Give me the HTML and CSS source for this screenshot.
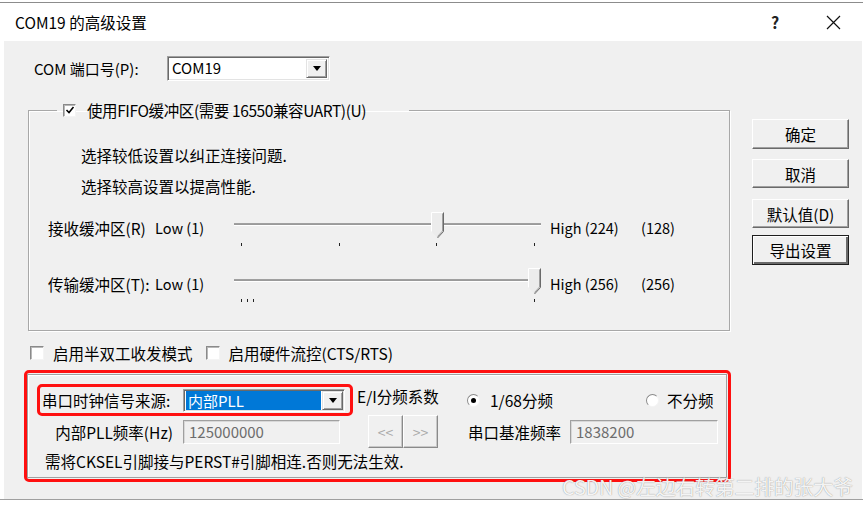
FILE: index.html
```html
<!DOCTYPE html>
<html lang="zh-CN">
<head>
<meta charset="utf-8">
<title>COM19 的高级设置</title>
<link rel="stylesheet" href="styles.css">
</head>
<body>
<div class="window">
  <div class="titlebar">
    <span class="title">COM19 的高级设置</span>
    <span class="help">?</span>
    <span class="close"><svg width="15" height="15" viewBox="0 0 15 15"><path d="M1 1L14 14M14 1L1 14" stroke="#111" stroke-width="1.2" fill="none"/></svg></span>
  </div>
  <div class="client">
    <div class="main">
      <div class="port-row">
        <span class="port-label">COM 端口号(P):</span>
        <div class="combo port-combo">
          <span class="combo-text">COM19</span>
          <span class="combo-btn"><svg width="8" height="5" viewBox="0 0 8 5"><path d="M0 0H8L4 5Z" fill="#000"/></svg></span>
        </div>
      </div>

      <fieldset class="group">
        <legend class="group-legend">
          <span class="check"><svg width="10" height="10" viewBox="0 0 10 10"><path d="M1.5 5L4 7.5L8.5 2" stroke="#000" stroke-width="1.6" fill="none"/></svg></span>
          <span class="legend-text">使用FIFO缓冲区(需要 16550兼容UART)(U)</span>
        </legend>
        <div class="group-body">
          <p class="hint">选择较低设置以纠正连接问题.</p>
          <p class="hint">选择较高设置以提高性能.</p>

          <div class="slider-row">
            <span class="s-label">接收缓冲区(R)</span>
            <span class="s-low">Low (1)</span>
            <div class="slider">
              <div class="track"></div>
              <i class="tick" style="left:7px"></i>
              <i class="tick" style="left:105px"></i>
              <i class="tick" style="left:202px"></i>
              <i class="tick" style="left:300px"></i>
              <svg class="thumb" style="left:197px" width="13" height="27" viewBox="0 0 13 27">
                <path d="M0.5 0.5H12.5V19.5L6.5 26L0.5 19.5Z" fill="#ececec"/>
                <path d="M0.5 19.5V0.5H12" stroke="#fff" fill="none"/>
                <path d="M12.5 0.5V19.5L6.5 26" stroke="#6a6a6a" fill="none"/>
                <path d="M11.5 1.5V19L6.5 24.5" stroke="#a0a0a0" fill="none"/>
              </svg>
            </div>
            <span class="s-high">High (224)</span>
            <span class="s-val">(128)</span>
          </div>

          <div class="slider-row">
            <span class="s-label">传输缓冲区(T):</span>
            <span class="s-low">Low (1)</span>
            <div class="slider">
              <div class="track"></div>
              <i class="tick" style="left:7px"></i>
              <i class="tick" style="left:13px"></i>
              <i class="tick" style="left:19px"></i>
              <i class="tick" style="left:300px"></i>
              <svg class="thumb" style="left:294px" width="13" height="27" viewBox="0 0 13 27">
                <path d="M0.5 0.5H12.5V19.5L6.5 26L0.5 19.5Z" fill="#ececec"/>
                <path d="M0.5 19.5V0.5H12" stroke="#fff" fill="none"/>
                <path d="M12.5 0.5V19.5L6.5 26" stroke="#6a6a6a" fill="none"/>
                <path d="M11.5 1.5V19L6.5 24.5" stroke="#a0a0a0" fill="none"/>
              </svg>
            </div>
            <span class="s-high">High (256)</span>
            <span class="s-val">(256)</span>
          </div>
        </div>
      </fieldset>

      <div class="opts">
        <span class="check"></span>
        <span class="opt-text">启用半双工收发模式</span>
        <span class="check opt2"></span>
        <span class="opt-text">启用硬件流控(CTS/RTS)</span>
      </div>

      <div class="clockbox">
        <div class="clockframe">
          <div class="clk-row1">
            <div class="mark">
              <span class="src-label">串口时钟信号来源:</span>
              <div class="combo src-combo">
                <span class="combo-sel">内部PLL</span>
                <span class="combo-btn"><svg width="8" height="5" viewBox="0 0 8 5"><path d="M0 0H8L4 5Z" fill="#000"/></svg></span>
              </div>
            </div>
            <span class="ei">E/I分频系数</span>
            <span class="radio-item r1"><span class="radio on"></span><span>1/68分频</span></span>
            <span class="radio-item r2"><span class="radio"></span><span>不分频</span></span>
          </div>
          <div class="clk-row2">
            <span class="pll-label">内部PLL频率(Hz)</span>
            <span class="field pll-field">125000000</span>
            <span class="arrows"><span class="abtn">&lt;&lt;</span><span class="abtn">&gt;&gt;</span></span>
            <span class="base-label">串口基准频率</span>
            <span class="field base-field">1838200</span>
          </div>
          <div class="clk-row3">需将CKSEL引脚接与PERST#引脚相连.否则无法生效.</div>
        </div>
      </div>
    </div>

    <div class="side">
      <span class="btn b1">确定</span>
      <span class="btn b2">取消</span>
      <span class="btn b3">默认值(D)</span>
      <span class="btn b4 default">导出设置</span>
    </div>
  </div>
  <div class="watermark">CSDN @左边右转第二排的张大爷</div>
</div>
</body>
</html>
```

FILE: styles.css
```css
* { box-sizing: border-box; }
html, body { margin: 0; padding: 0; background: #fff; }
body {
  width: 868px; height: 506px; overflow: hidden;
  font-family: "Noto Sans CJK SC", "Liberation Sans", sans-serif;
  font-size: 15.5px; color: #000;
}
.window {
  position: relative;
  margin-top: 2px;
  width: 863px;
  border-top: 1px solid #8c8c8c;
  border-bottom: 1px solid #a0a0a0;
  background: #fff;
}
.titlebar {
  height: 38px; display: flex; align-items: center;
  padding-left: 15px; background: #fff;
}
.title { flex: 1; line-height: 38px; }
.help { width: 16px; text-align: center; margin-right: 43px; font-size: 16px; font-weight: bold; color: #222; }
.close { width: 15px; height: 15px; margin-right: 22px; display: flex; }

.client {
  margin-left: 4px; width: 858px; height: 458px;
  background: #f0f0f0; display: flex;
}
.main { width: 726px; padding-top: 15px; }
.port-row { display: flex; align-items: center; height: 24px; padding-left: 30px; }
.port-label { width: 133px; font-size: 15px; }

.combo {
  display: flex; align-items: center; background: #fff;
  border: 1px solid; border-color: #a0a0a0 #fff #fff #a0a0a0;
  box-shadow: inset 1px 1px 0 #696969, inset -1px -1px 0 #e3e3e3;
  padding: 2px;
}
.port-combo { width: 163px; height: 25px; }
.combo-text { flex: 1; padding-left: 2px; font-size: 15px; line-height: 20px; }
.combo-btn {
  width: 21px; height: 19px; display: flex; align-items: center; justify-content: center;
  background: #f0f0f0; border: 1px solid; border-color: #e3e3e3 #696969 #696969 #e3e3e3;
  box-shadow: inset 1px 1px 0 #fff, inset -1px -1px 0 #a0a0a0;
}

.group {
  margin: 20px 0 0 24px; padding: 0; width: 702px;
  border: 1px solid #a8a8a8; box-shadow: inset 1px 1px 0 #fff, 1px 1px 0 #fff;
  min-width: 0;
}
.group-legend {
  margin-left: 28px; padding: 0 43px 0 6px; height: 20px;
  display: flex; align-items: center; gap: 11px; line-height: 20px;
}
.legend-text { letter-spacing: -0.4px; }
.check {
  width: 13px; height: 13px; background: #fff;
  border: 1px solid; border-color: #8a8a8a #f4f4f4 #f4f4f4 #8a8a8a;
  box-shadow: inset 1px 1px 0 #b8b8b8;
  display: flex; align-items: center; justify-content: center; flex: none;
}
.group-body { padding: 20px 0 24px 0; }
.hint { margin: 0 0 0 52px; line-height: 31px; }

.slider-row { display: flex; height: 36px; margin: 12px 0 0 19px; line-height: 28px; }
.slider-row + .slider-row { margin-top: 20px; }
.s-label { width: 107px; }
.s-low { width: 79px; font-size: 14.5px; }
.slider { position: relative; width: 307px; height: 36px; }
.track {
  position: absolute; left: 0; right: 0; top: 9px; height: 3px;
  border-top: 1px solid #a0a0a0; background: #9a9a9a; border-bottom: 1px solid #fff;
}
.tick { position: absolute; top: 29px; width: 1px; height: 3px; background: #222; }
.thumb { position: absolute; top: -2px; }
.s-high { width: 91px; margin-left: 9px; font-size: 14.5px; }
.s-val { font-size: 14.5px; }

.opts { display: flex; align-items: center; height: 20px; margin-top: 12px; padding-left: 26px; }
.opts .check { width: 14px; height: 14px; }
.opt-text { margin-left: 9px; }
.opt2 { margin-left: 13px; }

.clockbox {
  margin: 7px 0 0 20px; width: 707px;
  border: 3px solid #ff1010; border-radius: 5px;
  padding: 1px 1px 1px 0;
}
.clockframe {
  border: 1px solid #a0a0a0; box-shadow: inset 1px 1px 0 #fff;
  padding: 9px 0 3px 9px;
}
.clk-row1 { display: flex; align-items: flex-start; height: 32px; }
.mark {
  width: 316px; height: 32px; display: flex; align-items: center;
  border: 3px solid #ff1010; border-radius: 5px; padding-left: 2px;
}
.src-label { width: 141px; }
.src-combo { width: 162px; height: 23px; padding: 1px 1px 1px 2px; }
.combo-sel {
  width: 136px; height: 19px; background: #0078d7; color: #fff;
  line-height: 19px; padding-left: 2px; font-size: 15px;
}
.src-combo .combo-btn { margin-left: 1px; height: 19px; }
.ei { width: 110px; margin-left: 4px; line-height: 24px; }
.radio-item { display: flex; align-items: center; height: 32px; }
.r1 { width: 179px; gap: 10px; }
.r2 { gap: 8px; }
.radio {
  width: 13px; height: 13px; border-radius: 50%; background: #fff;
  border: 1px solid; border-color: #8a8a8a #f4f4f4 #f4f4f4 #8a8a8a;
  display: flex; align-items: center; justify-content: center;
}
.radio.on::after { content: ""; width: 5px; height: 5px; border-radius: 50%; background: #000; }

.clk-row2 { display: flex; align-items: center; height: 33px; margin-top: -1px; }
.pll-label { width: 146px; text-align: right; padding-right: 10px; }
.field {
  height: 24px; background: #f0f0f0; color: #6d6d6d;
  border: 1px solid; border-color: #a0a0a0 #fff #fff #a0a0a0;
  box-shadow: inset 1px 1px 0 #d8d8d8;
  padding-left: 5px; line-height: 22px; font-size: 15px;
}
.pll-field { width: 157px; }
.arrows { display: flex; margin-left: 28px; }
.abtn {
  width: 35px; height: 33px; display: flex; align-items: center; justify-content: center;
  color: #a8a8a8; font-size: 14px; background: #f0f0f0;
  border: 1px solid; border-color: #fff #8a8a8a #8a8a8a #fff;
  box-shadow: inset -1px -1px 0 #c8c8c8;
}
.base-label { width: 102px; margin-left: 30px; }
.base-field { width: 148px; }
.clk-row3 { line-height: 26px; padding-left: 8px; }

.side { margin-left: 22px; padding-top: 78px; display: flex; flex-direction: column; }
.btn {
  width: 97px; display: flex; align-items: center; justify-content: center;
  background: #f0f0f0; font-size: 15.5px;
  border: 1px solid; border-color: #fff #6a6a6a #6a6a6a #fff;
  box-shadow: inset -1px -1px 0 #a0a0a0;
}
.b1 { height: 30px; }
.b2 { height: 29px; margin-top: 10px; }
.b3 { height: 29px; margin-top: 11px; }
.b4 { height: 30px; margin-top: 7px; }
.btn.default {
  border: 1px solid #1e1e1e;
  box-shadow: inset 1px 1px 0 #fff, inset -2px -2px 0 #6a6a6a;
}

.watermark {
  position: absolute; left: 562px; top: 472px;
  font-size: 20px; line-height: 24px; letter-spacing: -0.3px;
  color: rgba(255,255,255,0.92);
  text-shadow: 0 0 1px rgba(90,90,90,0.75);
  white-space: nowrap;
}
```
